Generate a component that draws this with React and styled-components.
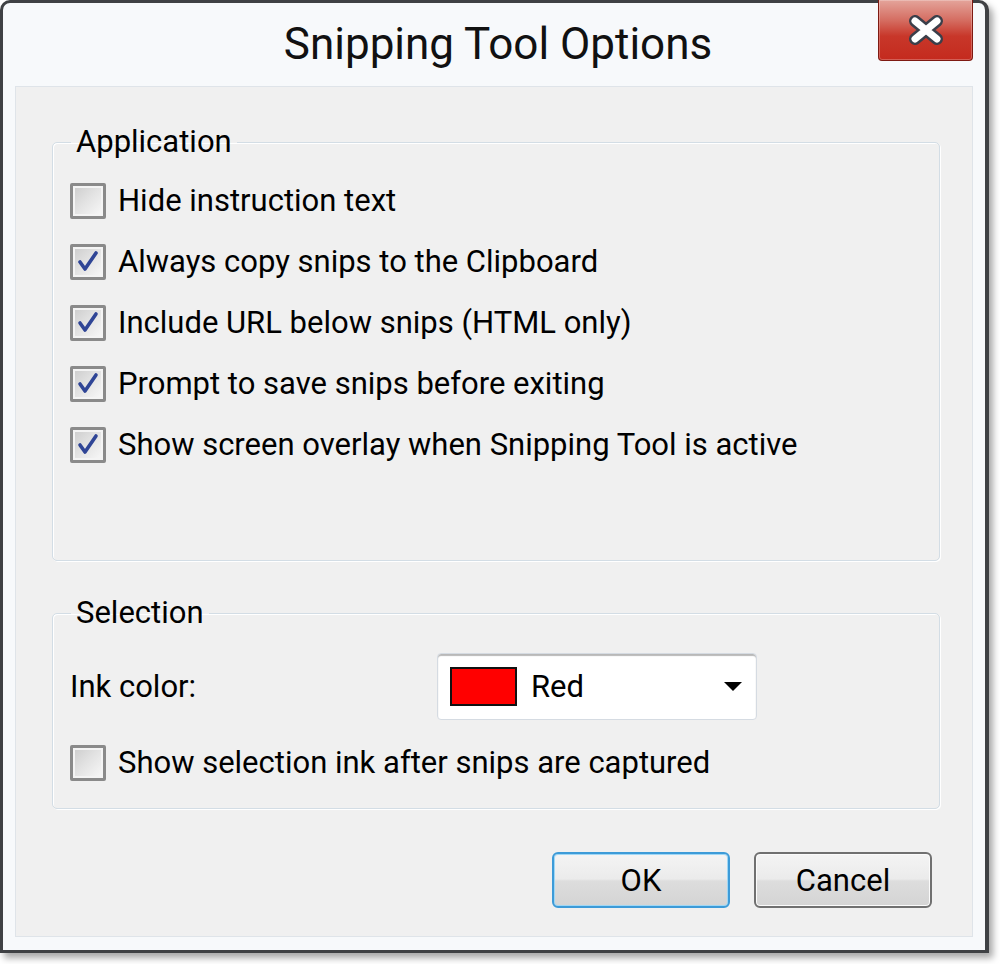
import React from 'react';
import styled, { createGlobalStyle } from 'styled-components';

const GlobalStyle = createGlobalStyle`
  html, body {
    margin: 0;
    padding: 0;
    background: #ffffff;
  }
  body {
    width: 1000px;
    height: 964px;
    overflow: hidden;
    font-family: Roboto, "Open Sans", "Liberation Sans", sans-serif;
    color: #000;
  }
`;

const Window = styled.div`
  box-sizing: border-box;
  width: 989px;
  height: 953px;
  border: 3px solid #3f4144;
  border-right-width: 4px;
  border-radius: 10px 10px 0 0;
  background: #f7f9fb;
  box-shadow: 4px 5px 7px rgba(0, 0, 0, 0.35);
  display: flex;
  flex-direction: column;
  padding: 0 12px 13px 12px;
`;

const TitleBar = styled.div`
  height: 85px;
  display: grid;
  grid-template-columns: 1fr auto 1fr;
  align-items: center;
  padding-left: 8px;
`;

const Title = styled.div`
  grid-column: 2;
  font-size: 44px;
  color: #111;
  margin-top: -2px;
`;

const CloseButton = styled.button`
  grid-column: 3;
  justify-self: end;
  align-self: start;
  margin-top: -3px;
  width: 95px;
  height: 61px;
  padding: 0;
  border: 1px solid #7e1a12;
  border-top: none;
  border-radius: 0 0 4px 4px;
  background: linear-gradient(#e4a49b 0%, #d46b5f 35%, #c8372a 60%, #c42a1e 100%);
  box-shadow: inset 0 0 0 1px rgba(255, 255, 255, 0.25);
  display: flex;
  align-items: center;
  justify-content: center;
`;

const Panel = styled.div`
  flex: 1;
  background: #f0f0f0;
  border: 1px solid #dfe4e9;
  display: flex;
  flex-direction: column;
  padding: 0 32px 28px 36px;
`;

const Group = styled.fieldset`
  margin: ${(p) => p.$top}px 0 0 0;
  padding: ${(p) => p.$padTop}px 16px ${(p) => p.$bottom}px 17px;
  border: 1px solid #d3dde5;
  border-radius: 5px;
  box-shadow: inset 1px 1px 0 #ffffff, 1px 1px 0 #ffffff;
  min-width: 0;
`;

const Legend = styled.legend`
  margin-left: 1px;
  padding: 0 5px;
  font-size: 31px;
  line-height: 40px;
`;

const Row = styled.label`
  height: 61px;
  margin-top: ${(p) => p.$gap || 0}px;
  display: flex;
  align-items: center;
  gap: 12px;
  font-size: 31px;
`;

const Box = styled.span`
  box-sizing: border-box;
  width: 36px;
  height: 36px;
  flex: none;
  border: 3px solid #8a8a8a;
  border-radius: 2px;
  padding: 2px;
  background: #f4f4f4;
  display: flex;
`;

const BoxInner = styled.span`
  flex: 1;
  background: linear-gradient(135deg, #cfcfcf 0%, #e2e2e2 45%, #f6f6f6 100%);
  display: flex;
  align-items: center;
  justify-content: center;
`;

const InkRow = styled.div`
  margin-top: 20px;
  display: flex;
  align-items: center;
  font-size: 31px;
`;

const InkLabel = styled.span`
  width: 367px;
`;

const Combo = styled.div`
  box-sizing: border-box;
  width: 320px;
  height: 67px;
  background: #ffffff;
  border: 1px solid #d5dbe2;
  border-radius: 4px;
  box-shadow: inset 0 2px 1px rgba(0, 0, 0, 0.28);
  display: flex;
  align-items: center;
  padding: 0 14px 0 12px;
`;

const Swatch = styled.span`
  box-sizing: border-box;
  width: 67px;
  height: 39px;
  background: ${(p) => p.$color};
  border: 2px solid #111;
  margin-right: 14px;
`;

const ComboText = styled.span`
  flex: 1;
`;

const Arrow = styled.span`
  width: 0;
  height: 0;
  border-left: 9px solid transparent;
  border-right: 9px solid transparent;
  border-top: 9px solid #000;
`;

const ButtonRow = styled.div`
  margin-top: 43px;
  margin-right: 8px;
  display: flex;
  justify-content: flex-end;
  gap: 24px;
`;

const Button = styled.button`
  box-sizing: border-box;
  width: 178px;
  height: 56px;
  border: 2px solid ${(p) => (p.$default ? '#3d9bd8' : '#707070')};
  border-radius: 6px;
  background: linear-gradient(#f4f4f4 0%, #ebebeb 48%, #dddddd 52%, #d4d4d4 100%);
  box-shadow: inset 0 0 0 1px ${(p) => (p.$default ? '#9fd7f5' : '#fbfbfb')};
  font-family: inherit;
  font-size: 31px;
  color: #000;
  padding: 0;
`;

const CloseGlyph = () => (
  <svg width="38" height="30" viewBox="0 0 38 30">
    <path d="M8 6 L30 24 M30 6 L8 24" stroke="#3b3f4a" strokeWidth="12" strokeLinecap="round" />
    <path d="M8 6 L30 24 M30 6 L8 24" stroke="#ffffff" strokeWidth="7" strokeLinecap="round" />
  </svg>
);

const Checkbox = ({ checked }) => (
  <Box>
    <BoxInner>
      {checked && (
        <svg width="24" height="24" viewBox="0 0 24 24">
          <path d="M4 12 L9 19 L20 3" fill="none" stroke="#2f4596" strokeWidth="3.6" strokeLinejoin="round" strokeLinecap="round" />
        </svg>
      )}
    </BoxInner>
  </Box>
);

const appOptions = [
  { text: 'Hide instruction text', checked: false },
  { text: 'Always copy snips to the Clipboard', checked: true },
  { text: 'Include URL below snips (HTML only)', checked: true },
  { text: 'Prompt to save snips before exiting', checked: true },
  { text: 'Show screen overlay when Snipping Tool is active', checked: true },
];

const App = () => {
  return (
    <>
      <GlobalStyle />
      <Window>
        <TitleBar>
          <Title>Snipping Tool Options</Title>
          <CloseButton aria-label="Close">
            <CloseGlyph />
          </CloseButton>
        </TitleBar>
        <Panel>
          <Group $top={35} $padTop={8} $bottom={85}>
            <Legend>Application</Legend>
            {appOptions.map((o) => (
              <Row key={o.text}>
                <Checkbox checked={o.checked} />
                {o.text}
              </Row>
            ))}
          </Group>
          <Group $top={32} $padTop={0} $bottom={15}>
            <Legend>Selection</Legend>
            <InkRow>
              <InkLabel>Ink color:</InkLabel>
              <Combo>
                <Swatch $color="#ff0000" />
                <ComboText>Red</ComboText>
                <Arrow />
              </Combo>
            </InkRow>
            <Row $gap={12}>
              <Checkbox checked={false} />
              Show selection ink after snips are captured
            </Row>
          </Group>
          <ButtonRow>
            <Button $default>OK</Button>
            <Button>Cancel</Button>
          </ButtonRow>
        </Panel>
      </Window>
    </>
  );
};

export default App;
